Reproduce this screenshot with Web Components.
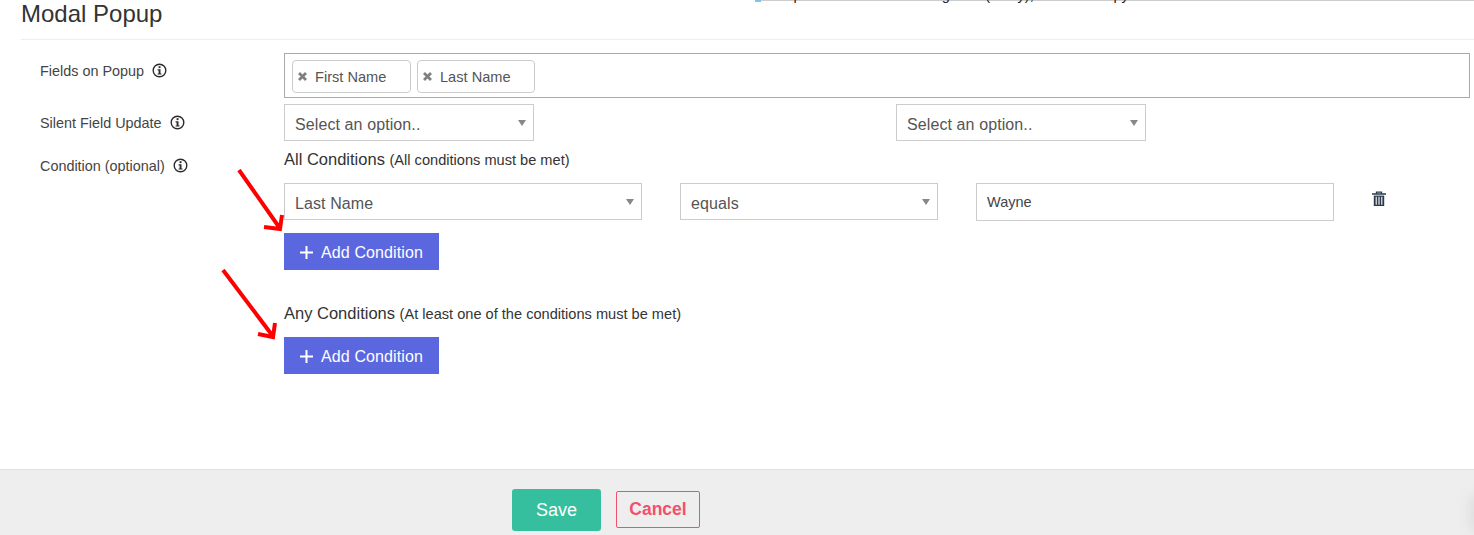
<!DOCTYPE html>
<html>
<head>
<meta charset="utf-8">
<title>Modal Popup</title>
<style>
    html, body { margin: 0; padding: 0; background: #fff; height: 535px; overflow: hidden; }
    body { font-family: "Liberation Sans", Arial, sans-serif; color: #333; }
</style>
</head>
<body>

<template id="tpl-info">
    <style>
        :host { display: inline-flex; margin-left: 8px; }
        svg { width: 15px; height: 15px; display: block; }
    </style>
    <svg viewBox="0 0 15 15">
        <circle cx="7.5" cy="7.5" r="6.3" fill="none" stroke="#2b2b2b" stroke-width="1.4" />
        <rect x="6.6" y="3.2" width="1.9" height="1.9" fill="#2b2b2b" />
        <path d="M5.6 6.2H8.5V10.4H9.5V11.6H5.6V10.4H6.6V7.4H5.6Z" fill="#2b2b2b" />
    </svg>
</template>

<template id="tpl-field-label">
    <style>
        :host { display: flex; align-items: flex-start; font-size: 14.4px; line-height: 16px; color: #444; white-space: nowrap; }
    </style>
    <slot></slot>
    <info-icon></info-icon>
</template>

<template id="tpl-tag">
    <style>
        :host {
            display: inline-flex; align-items: center; box-sizing: border-box;
            height: 33px; padding-left: 4px;
            border: 1px solid #ccc; border-radius: 4px; background: #fff;
            font-size: 14.6px; color: #555;
        }
        svg { width: 11px; height: 11px; margin-right: 7px; }
    </style>
    <svg viewBox="0 0 11 11"><path d="M2 2L9 9M9 2L2 9" stroke="#808080" stroke-width="2.8" /></svg>
    <slot></slot>
</template>

<template id="tpl-select">
    <style>
        :host {
            display: flex; align-items: center; justify-content: space-between; box-sizing: border-box;
            height: 37px; padding: 0 10px;
            border: 1px solid #ccc; background: #fff;
            font-size: 16px; letter-spacing: .1px; color: #555;
        }
        span { padding-top: 5px; }
        i { width: 0; height: 0; margin-right: -3px; border: 4px solid transparent; border-top: 6px solid #888; border-bottom: 0; }
    </style>
    <span><slot></slot></span>
    <i></i>
</template>

<template id="tpl-add-button">
    <style>
        :host {
            display: flex; align-items: center; box-sizing: border-box;
            width: 155px; height: 37px; padding: 2px 0 0 16px;
            background: #5a67de; color: #fff; font-size: 16px; letter-spacing: .12px;
        }
        svg { width: 13px; height: 13px; margin-right: 8px; }
    </style>
    <svg viewBox="0 0 13 13"><path d="M6.5 0V13M0 6.5H13" stroke="#fff" stroke-width="2" /></svg>
    <slot></slot>
</template>

<template id="tpl-condition-heading">
    <style>
        :host { display: block; font-size: 16.5px; line-height: 20px; color: #333; white-space: nowrap; }
        small { font-size: 14.6px; }
    </style>
    <slot name="title"></slot> <small><slot name="note"></slot></small>
</template>

<template id="tpl-red-arrow">
    <style>
        :host { position: absolute; display: block; }
        svg { display: block; width: 70px; height: 80px; }
        path { stroke: #fe0000; stroke-width: 4; fill: none; }
    </style>
    <svg viewBox="0 0 70 80"><path /></svg>
</template>

<template id="tpl-footer">
    <style>
        :host {
            display: flex; align-items: flex-start; box-sizing: border-box;
            height: 66px; padding: 19px 0 0 512px;
            background: #eee; border-top: 1px solid #e0e0e0;
            position: relative; overflow: hidden;
        }
        .save {
            width: 89px; height: 42px; border-radius: 3px; background: #35bf9f; color: #fff;
            display: flex; align-items: center; justify-content: center; font-size: 18px;
        }
        .cancel {
            box-sizing: border-box; width: 84px; height: 37px; margin: 2px 0 0 15px;
            border: 1px solid #f2506e; border-radius: 2px; color: #f2506e;
            display: flex; align-items: center; justify-content: center; font-size: 17.5px; font-weight: bold;
        }
        .glow {
            position: absolute; right: -10px; top: 26px; width: 14px; height: 34px;
            background: #ddd; filter: blur(6px);
        }
    </style>
    <div class="save">Save</div>
    <div class="cancel">Cancel</div>
    <div class="glow"></div>
</template>

<template id="tpl-modal-form">
    <style>
        :host { display: block; position: relative; height: 535px; overflow: hidden; }
        .backdrop-line { position: absolute; left: 755px; right: 0; top: 0; height: 1px; background: #ccc; }
        .backdrop-tint { position: absolute; left: 755px; top: 0; width: 6px; height: 2px; background: #7cc4e8; }
        .clipped {
            position: absolute; left: 783px; top: -13px; width: 345px;
            font-size: 14.5px; line-height: 16px; color: #222; white-space: nowrap; overflow: hidden;
        }
        .body { height: 469px; box-sizing: border-box; padding-left: 21px; }
        h1 {
            margin: 0; height: 40px; box-sizing: border-box;
            font-size: 24px; font-weight: normal; line-height: 28px; color: #333;
            border-bottom: 1px solid #eee;
        }
        .grid {
            display: grid; grid-template-columns: 263px 1fr; padding-top: 13px;
            margin-right: 4px;
        }
        .label-col { padding-left: 19px; }
        .label-1 { height: 51px; padding-top: 10px; box-sizing: border-box; }
        .label-2 { height: 43px; padding-top: 11px; box-sizing: border-box; }
        .label-3 { padding-top: 11px; }
        .tags {
            display: flex; gap: 6px; box-sizing: border-box; height: 45px;
            padding: 6px 7px; border: 1px solid #aaa; margin-bottom: 6px;
        }
        .tags tag-chip:nth-child(1) { width: 119px; }
        .tags tag-chip:nth-child(2) { width: 118px; }
        .selects { display: flex; gap: 362px; }
        .selects select-box { width: 250px; }
        .cond { margin-top: 8px; height: 20px; }
        .row { display: flex; margin-top: 14px; align-items: flex-start; }
        .row .a { width: 358px; }
        .row .b { width: 258px; margin-left: 38px; }
        .row .c {
            width: 358px; height: 38px; margin-left: 38px; box-sizing: border-box; padding-left: 10px;
            border: 1px solid #ccc; font-size: 14.5px; color: #444; display: flex; align-items: center;
        }
        .trash { width: 16px; height: 16px; margin: 8px 0 0 37px; }
        .add-1 { margin-top: 12px; }
        .any { margin-top: 33px; }
        .add-2 { margin-top: 13px; }
    </style>
    <div class="backdrop-line"></div>
    <div class="backdrop-tint"></div>
    <div class="clipped">Update the lead if existing lead (if any), with new copy</div>
    <div class="body">
        <h1>Modal Popup</h1>
        <div class="grid">
            <div class="label-col">
                <field-label class="label-1">Fields on Popup</field-label>
                <field-label class="label-2">Silent Field Update</field-label>
                <field-label class="label-3">Condition (optional)</field-label>
            </div>
            <div>
                <div class="tags">
                    <tag-chip>First Name</tag-chip>
                    <tag-chip>Last Name</tag-chip>
                </div>
                <div class="selects">
                    <select-box>Select an option..</select-box>
                    <select-box>Select an option..</select-box>
                </div>
                <condition-heading class="cond">
                    <span slot="title">All Conditions</span>
                    <span slot="note">(All conditions must be met)</span>
                </condition-heading>
                <div class="row">
                    <select-box class="a">Last Name</select-box>
                    <select-box class="b">equals</select-box>
                    <div class="c">Wayne</div>
                    <svg class="trash" viewBox="0 0 16 16">
                        <path d="M1 3H15M5.5 3V1.2H10.5V3" stroke="#2b3a4a" stroke-width="1.3" fill="none" />
                        <rect x="2.8" y="4.6" width="10.4" height="10.4" fill="#2b3a4a" />
                        <path d="M5.2 5.8V13.8M8 5.8V13.8M10.8 5.8V13.8" stroke="#fff" stroke-width="1.1" />
                    </svg>
                </div>
                <add-button class="add-1">Add Condition</add-button>
                <condition-heading class="any">
                    <span slot="title">Any Conditions</span>
                    <span slot="note">(At least one of the conditions must be met)</span>
                </condition-heading>
                <add-button class="add-2">Add Condition</add-button>
            </div>
        </div>
    </div>
    <red-arrow style="left:237px;top:169px" d="M2 1L42 58M27 58L43 60L45 46"></red-arrow>
    <red-arrow style="left:221px;top:269px" d="M2 1L51 66M37 65L52 68L54 54"></red-arrow>
    <form-footer></form-footer>
</template>

<script>
    // every element just clones its template into an open shadow root
    function register(tag, templateId, connected) {
        customElements.define(tag, class extends HTMLElement {
            constructor() {
                super();
                this.attachShadow({ mode: 'open' });
                this.shadowRoot.appendChild(document.getElementById(templateId).content.cloneNode(true));
            }

            connectedCallback() {
                if (connected) connected(this);
            }
        });
    }

    register('info-icon', 'tpl-info');
    register('field-label', 'tpl-field-label');
    register('tag-chip', 'tpl-tag');
    register('select-box', 'tpl-select');
    register('add-button', 'tpl-add-button');
    register('condition-heading', 'tpl-condition-heading');
    register('red-arrow', 'tpl-red-arrow', (el) => {
        el.shadowRoot.querySelector('path').setAttribute('d', el.getAttribute('d'));
    });
    register('form-footer', 'tpl-footer');
    register('modal-form', 'tpl-modal-form');
</script>

<modal-form></modal-form>

</body>
</html>
